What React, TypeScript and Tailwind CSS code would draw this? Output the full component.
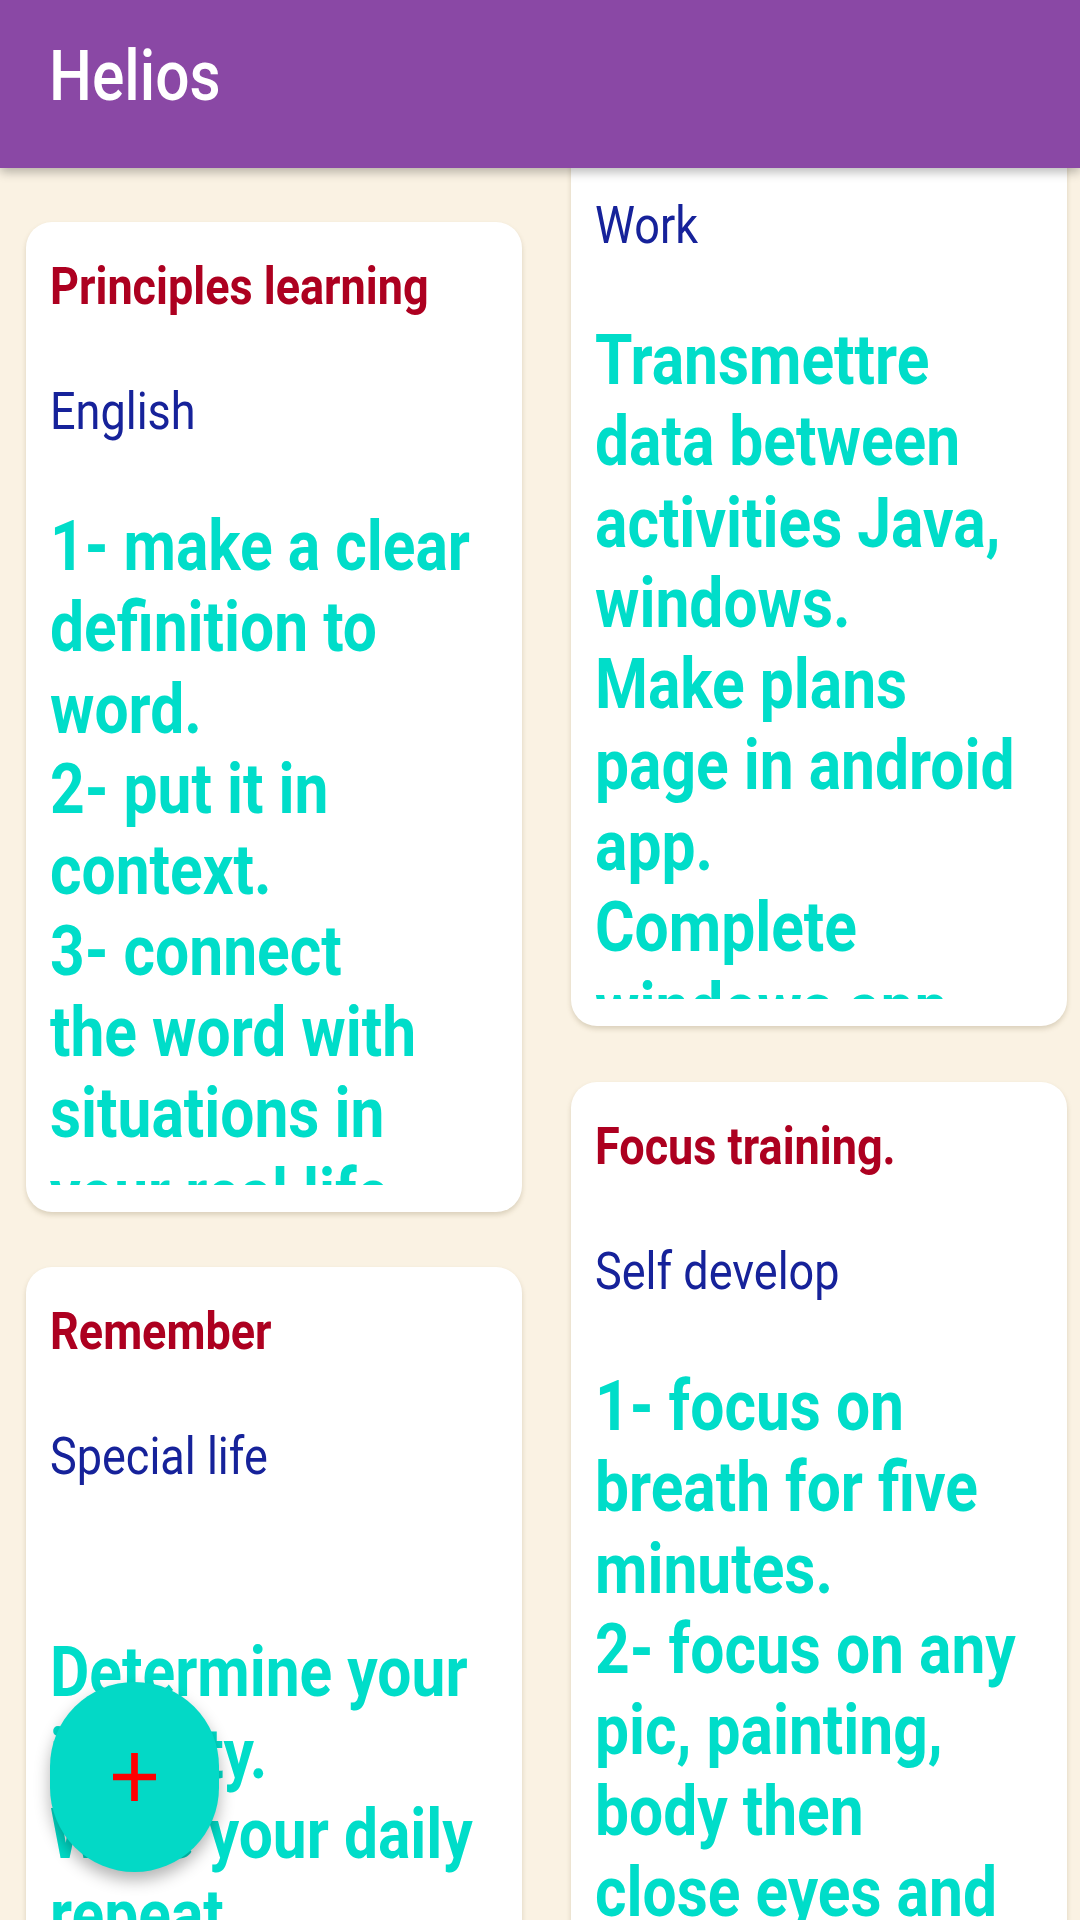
import React from "react";

type Note = { title: string; category: string; lines: string[] };

const notes: { left: Note[]; right: Note[] } = {
  left: [
    {
      title: "Principles learning",
      category: "English",
      lines: [
        "1- make a clear",
        "definition to",
        "word.",
        "2- put it in",
        "context.",
        "3- connect",
        "the word with",
        "situations in",
        "your real life.",
      ],
    },
    {
      title: "Remember",
      category: "Special life",
      lines: ["", "Determine your", "identity.", "Write your daily", "repeat.", "actions."],
    },
  ],
  right: [
    {
      title: "Android plans",
      category: "Work",
      lines: [
        "Transmettre",
        "data between",
        "activities Java,",
        "windows.",
        "Make plans",
        "page in android",
        "app.",
        "Complete",
        "windows app.",
      ],
    },
    {
      title: "Focus training.",
      category: "Self develop",
      lines: [
        "1- focus on",
        "breath for five",
        "minutes.",
        "2- focus on any",
        "pic, painting,",
        "body then",
        "close eyes and",
        "imagine it.",
      ],
    },
  ],
};

function Card({ note }: { note: Note }) {
  return (
    <div className="h-[990px] shrink-0 rounded-[26px] bg-white px-[24px] shadow-[0_3px_5px_rgba(110,90,50,0.22)]">
      <div className="h-[963px] overflow-hidden">
        <div className="origin-top [transform:scaleY(1.15)] pt-[30px]">
          <div className="whitespace-nowrap text-[45px] font-bold leading-[52.7px] text-[#ad0020]">
            {note.title}
          </div>
          <div className="mt-[56px] whitespace-nowrap text-[45px] font-normal leading-[52.7px] text-[#16229a]">
            {note.category}
          </div>
          <div className="mt-[56.5px] text-[60.5px] font-bold leading-[70.4px] text-[#00ddc9]">
            {note.lines.map((l, i) => (
              <div key={i} className="h-[70.4px] whitespace-nowrap">
                {l}
              </div>
            ))}
          </div>
        </div>
      </div>
    </div>
  );
}

export default function App() {
  return (
    <div className="relative h-[1920px] w-[1080px] overflow-hidden bg-[#faf2e3] font-[Roboto,sans-serif]">
      <header className="absolute inset-x-0 top-0 z-10 h-[168px] bg-[#8a48a5] pl-[49px] pt-[37px] shadow-[0_4px_10px_rgba(0,0,0,0.28)]">
        <div className="origin-top [transform:scaleY(1.15)] text-[60.5px] font-medium leading-[70.3px] text-white">
          Helios
        </div>
      </header>

      <main className="flex gap-[49px] pl-[26px]">
        <div className="flex w-[496px] flex-col gap-[55px] pt-[222px]">
          {notes.left.map((n, i) => (
            <Card key={i} note={n} />
          ))}
        </div>
        <div className="flex w-[496px] flex-col gap-[56px] pt-[36px]">
          {notes.right.map((n, i) => (
            <Card key={i} note={n} />
          ))}
        </div>
      </main>

      <button
        type="button"
        aria-label="Add note"
        className="absolute left-[50px] top-[1682px] z-20 flex h-[190px] w-[169px] items-center justify-center rounded-full bg-[#03d9c6] shadow-[0_8px_16px_rgba(0,0,0,0.3)]"
      >
        <svg width="43" height="48" viewBox="0 0 43 48">
          <path d="M0 24H43M21.5 0V48" stroke="#ff0000" strokeWidth="6.7" fill="none" />
        </svg>
      </button>
    </div>
  );
}
